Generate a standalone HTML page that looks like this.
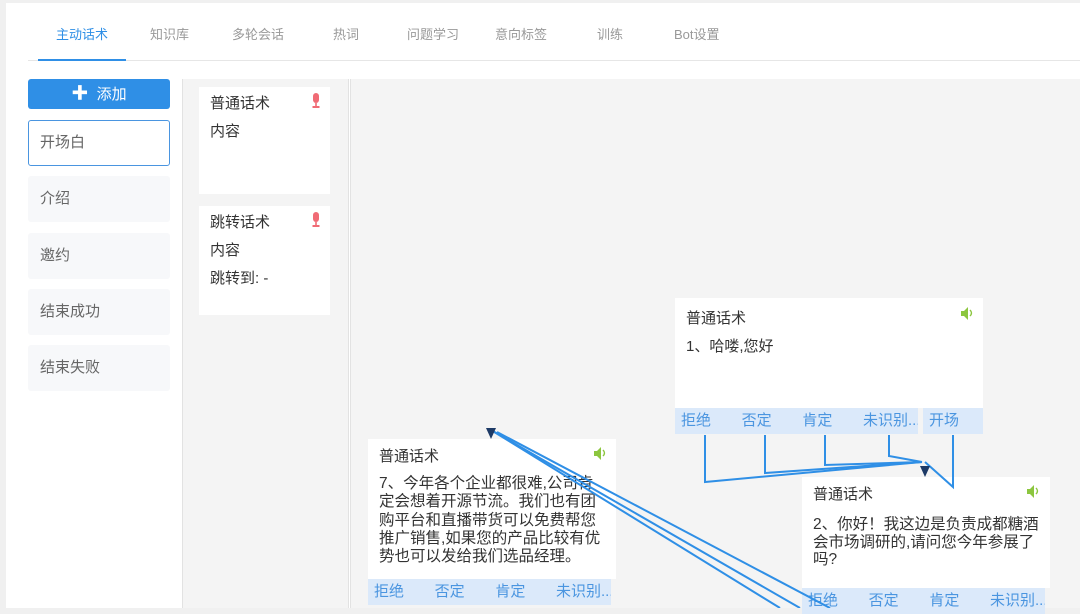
<!DOCTYPE html>
<html><head><meta charset="utf-8"><style>
*{margin:0;padding:0;box-sizing:border-box}
body{width:1080px;height:608px;overflow:hidden;background:#f0f0f0;font-family:"Liberation Sans","Noto Sans CJK SC",sans-serif;position:relative}
.panel{position:absolute;left:6px;top:3px;width:1074px;height:605px;background:#fff}
.abs{position:absolute}
.tab{position:absolute;top:24px;font-size:13px;color:#999}
.item{position:absolute;left:28px;width:142px;height:46px;background:#f7f8fa;border-radius:3px;font-size:15px;color:#666;padding-left:12px;line-height:46px}
.card{position:absolute;background:#fff;font-size:15px;color:#333;line-height:28px;padding:3px 11px}
.mic{position:absolute;right:9px;top:6px;width:10px;height:16px}
.node{position:absolute;background:#fff;font-size:15px;color:#333}
.btns{position:absolute;background:#dbe9fa;color:#4a95e0;font-size:15px;height:26px;line-height:26px;display:flex;white-space:nowrap;overflow:hidden}
.btns span{width:61px;padding-left:6px}
.txt{font-size:15.5px;letter-spacing:0}
</style></head><body>
<div class="panel"></div>
<div class="tab" style="left:56px;color:#2f8fe6">主动话术</div>
<div class="tab" style="left:150px">知识库</div>
<div class="tab" style="left:232px">多轮会话</div>
<div class="tab" style="left:333px">热词</div>
<div class="tab" style="left:407px">问题学习</div>
<div class="tab" style="left:495px">意向标签</div>
<div class="tab" style="left:597px">训练</div>
<div class="tab" style="left:674px">Bot设置</div>
<div class="abs" style="left:28px;top:60px;width:1052px;height:1px;background:#e6e6e6"></div>
<div class="abs" style="left:38px;top:59px;width:88px;height:2px;background:#2f8fe6"></div>
<div class="abs" style="left:28px;top:79px;width:142px;height:30px;background:#2f8fe6;border-radius:3px;color:#fff;font-size:15px;line-height:30px;text-align:center"><b style="font-size:17px">✚</b>&nbsp; 添加</div>
<div class="item" style="top:120px;background:#fff;border:1px solid #4a95e0;line-height:44px;padding-left:11px">开场白</div>
<div class="item" style="top:176px">介绍</div>
<div class="item" style="top:233px">邀约</div>
<div class="item" style="top:289px">结束成功</div>
<div class="item" style="top:345px">结束失败</div>
<div class="abs" style="left:182px;top:79px;width:167px;height:529px;background:#f4f4f4;border-left:1px solid #e2e2e2;border-right:1px solid #e2e2e2"></div>
<div class="card" style="left:199px;top:87px;width:131px;height:107px">普通话术<br>内容<svg class="mic" viewBox="0 0 10 16"><rect x="2" y="0" width="6" height="10" rx="3" fill="#f06b75"/><rect x="4.2" y="10" width="1.6" height="3" fill="#f06b75"/><rect x="1.5" y="13" width="7" height="2" fill="#f06b75"/></svg></div>
<div class="card" style="left:199px;top:206px;width:131px;height:109px">跳转话术<br>内容<br>跳转到: -<svg class="mic" viewBox="0 0 10 16"><rect x="2" y="0" width="6" height="10" rx="3" fill="#f06b75"/><rect x="4.2" y="10" width="1.6" height="3" fill="#f06b75"/><rect x="1.5" y="13" width="7" height="2" fill="#f06b75"/></svg></div>
<div class="abs" style="left:350px;top:79px;width:730px;height:529px;background:#f4f4f4;border-left:1px solid #e2e2e2"></div>

<div class="node" style="left:675px;top:298px;width:308px;height:110px;padding:7px 11px;line-height:28px">普通话术<br>1、哈喽,您好</div>
<div class="btns" style="left:675px;top:408px;width:243px"><span>拒绝</span><span>否定</span><span>肯定</span><span>未识别...</span></div>
<div class="btns" style="left:923px;top:408px;width:60px"><span>开场</span></div>

<div class="node" style="left:368px;top:439px;width:248px;height:140px;padding:9px 11px;line-height:18px">普通话术<div class="txt" style="margin-top:9px;line-height:18.3px;width:226px">7、今年各个企业都很难,公司肯定会想着开源节流。我们也有团购平台和直播带货可以免费帮您推广销售,如果您的产品比较有优势也可以发给我们选品经理。</div></div>
<div class="btns" style="left:368px;top:579px;width:243px"><span>拒绝</span><span>否定</span><span>肯定</span><span>未识别...</span></div>

<div class="node" style="left:802px;top:477px;width:248px;height:111px;padding:9px 11px;line-height:18px">普通话术<div class="txt" style="margin-top:12px;line-height:17.5px;width:229px">2、你好！我这边是负责成都糖酒会市场调研的,请问您今年参展了吗?</div></div>
<div class="btns" style="left:802px;top:588px;width:243px"><span>拒绝</span><span>否定</span><span>肯定</span><span>未识别...</span></div>

<svg class="abs" style="left:0;top:0" width="1080" height="608">
<g fill="none" stroke="#2f8fe6" stroke-width="2">
<path d="M705 435V482L922 462"/><path d="M765 435V473L922 462"/><path d="M825 435V465L922 462"/><path d="M889 435V456L922 462"/><path d="M953 435V487L925 462"/>
<path d="M491 430L800 608"/><path d="M491 430L780 608"/><path d="M497 432L830 608"/>
</g>
<path d="M920 466h10l-5 11z" fill="#1d3a66"/>
<path d="M486 428h10l-5 11z" fill="#1d3a66"/>
<g fill="#8cc63f"><path d="M961 311h3l4-4v13l-4-4h-3z"/><path d="M594 451h3l4-4v13l-4-4h-3z"/><path d="M1027 489h3l4-4v13l-4-4h-3z"/></g>
<g fill="none" stroke="#8cc63f" stroke-width="1.4"><path d="M970 310q3 3 0 6"/><path d="M603 450q3 3 0 6"/><path d="M1036 488q3 3 0 6"/></g>
</svg>
</body></html>
